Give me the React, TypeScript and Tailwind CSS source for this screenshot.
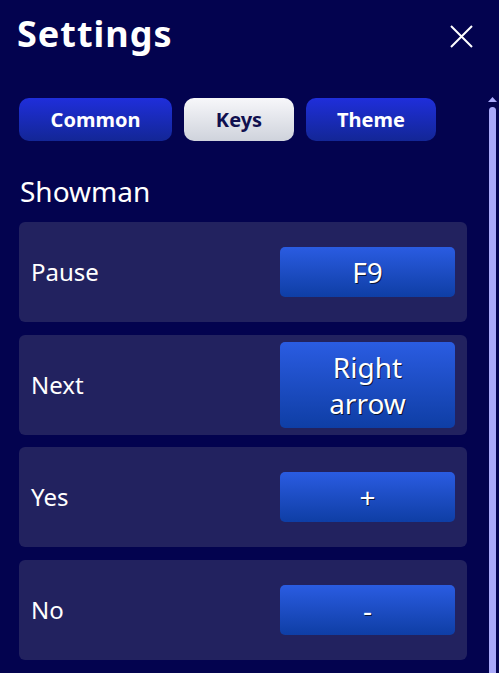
import React from 'react';

const keys: { label: string; value: string }[] = [
  { label: 'Pause', value: 'F9' },
  { label: 'Next', value: 'Right arrow' },
  { label: 'Yes', value: '+' },
  { label: 'No', value: '-' },
];

const tabs: { name: string; cls: string }[] = [
  { name: 'Common', cls: 'w-[153px] text-white bg-gradient-to-b from-[#1f2edb] to-[#132696]' },
  { name: 'Keys', cls: 'w-[110px] text-[#10104f] bg-gradient-to-b from-[#f7f7fa] to-[#cfd3dc]' },
  { name: 'Theme', cls: 'w-[130px] text-white bg-gradient-to-b from-[#1f2edb] to-[#132696]' },
];

export default function App() {
  return (
    <div
      className="w-[499px] h-[673px] overflow-hidden bg-[#03034f] text-white flex flex-col"
      style={{ fontFamily: '"Noto Sans", "Open Sans", sans-serif' }}
    >
      <div className="h-[95px] shrink-0 flex justify-between items-start pl-[17px] pr-[26px]">
        <h1 className="pt-[16px] text-[36px] leading-[36px] font-bold tracking-[1px]">Settings</h1>
        <button className="mt-[25px]" aria-label="Close">
          <svg width="23" height="23" viewBox="0 0 23 23" fill="none" stroke="white" strokeWidth="2">
            <path d="M1 1L22 22M22 1L1 22" />
          </svg>
        </button>
      </div>

      <div className="flex flex-1 min-h-0">
        <div className="flex-1 pl-[19px] pr-[21px]">
          <div className="flex gap-[12px] mt-[3px]">
            {tabs.map((t) => (
              <button
                key={t.name}
                className={`h-[43px] rounded-[10px] text-[20px] font-bold ${t.cls}`}
              >
                {t.name}
              </button>
            ))}
          </div>

          <h2 className="mt-[33px] mb-[14px] text-[28px] leading-[34px] pl-[1px]">Showman</h2>

          <div className="flex flex-col gap-[12.5px]">
            {keys.map((k) => (
              <div
                key={k.label}
                className="h-[100px] rounded-[6px] bg-[#22225f] flex items-center justify-between pl-[12px] pr-[12px]"
              >
                <span className="text-[24px]">{k.label}</span>
                <button className="w-[175px] min-h-[50px] py-[7px] px-[20px] rounded-[5px] bg-gradient-to-b from-[#2a5ce2] to-[#0e3ea5] text-[28px] leading-[36px] [text-shadow:1px_1px_0_rgba(0,0,0,0.7)]">
                  {k.value}
                </button>
              </div>
            ))}
          </div>
        </div>

        <div className="w-[9px] mr-[2px] flex flex-col items-center">
          <svg width="9" height="5" viewBox="0 0 9 5" className="mt-[2px]">
            <path d="M4.5 0L9 5H0Z" fill="#a9a9f9" />
          </svg>
          <div className="mt-[5px] w-[7px] flex-1 rounded-t-full bg-[#a9a9f9]" />
        </div>
      </div>
    </div>
  );
}
